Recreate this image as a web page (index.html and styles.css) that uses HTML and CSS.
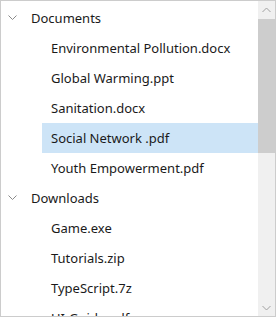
FILE: index.html
```html
<!DOCTYPE html>
<html lang="en">
<head>
    <meta charset="UTF-8">
    <title>TreeView</title>
    <link rel="stylesheet" href="styles.css">
</head>
<body>
    <div class="tree">
        <div class="list">
            <div class="node parent">
                <svg class="chevron" width="9" height="6" viewBox="0 0 9 6"><path d="M0.5 0.5 L4.5 4.5 L8.5 0.5" fill="none" stroke="#8a8a8a" stroke-width="1"/></svg>
                <span>Documents</span>
            </div>
            <div class="node child">Environmental Pollution.docx</div>
            <div class="node child">Global Warming.ppt</div>
            <div class="node child">Sanitation.docx</div>
            <div class="node child selected">Social Network .pdf</div>
            <div class="node child">Youth Empowerment.pdf</div>
            <div class="node parent">
                <svg class="chevron" width="9" height="6" viewBox="0 0 9 6"><path d="M0.5 0.5 L4.5 4.5 L8.5 0.5" fill="none" stroke="#8a8a8a" stroke-width="1"/></svg>
                <span>Downloads</span>
            </div>
            <div class="node child">Game.exe</div>
            <div class="node child">Tutorials.zip</div>
            <div class="node child">TypeScript.7z</div>
            <div class="node child">UI-Guide.pdf</div>
        </div>
        <div class="scrollbar">
            <div class="arrow">
                <svg width="9" height="6" viewBox="0 0 9 6"><path d="M0.5 5 L4.5 1 L8.5 5" fill="none" stroke="#a0a0a0" stroke-width="1"/></svg>
            </div>
            <div class="track">
                <div class="thumb"></div>
            </div>
            <div class="arrow">
                <svg width="9" height="6" viewBox="0 0 9 6"><path d="M0.5 1 L4.5 5 L8.5 1" fill="none" stroke="#a0a0a0" stroke-width="1"/></svg>
            </div>
        </div>
    </div>
</body>
</html>
```

FILE: styles.css
```css
body {
    margin: 0;
    font-family: "Noto Sans", "Open Sans", sans-serif;
    font-size: 13px;
    color: #1a1a1a;
}
.tree {
    width: 276px;
    height: 317px;
    box-sizing: border-box;
    border: 1px solid #cccccc;
    display: flex;
    background-color: #fff;
}
.list {
    flex: 1;
    overflow: hidden;
    padding-top: 2px;
}
.node {
    height: 30px;
    display: flex;
    align-items: center;
    white-space: nowrap;
}
.parent {
    padding-left: 7px;
}
.chevron {
    margin-right: 14px;
}
.child {
    margin-left: 41px;
    padding-left: 9px;
}
.selected {
    background-color: #cde4f7;
}
.scrollbar {
    width: 17px;
    background-color: #f0f0f0;
    display: flex;
    flex-direction: column;
}
.arrow {
    height: 17px;
    display: flex;
    align-items: center;
    justify-content: center;
}
.track {
    flex: 1;
}
.thumb {
    height: 134px;
    margin-top: 1px;
    background-color: #cdcdcd;
}
```
